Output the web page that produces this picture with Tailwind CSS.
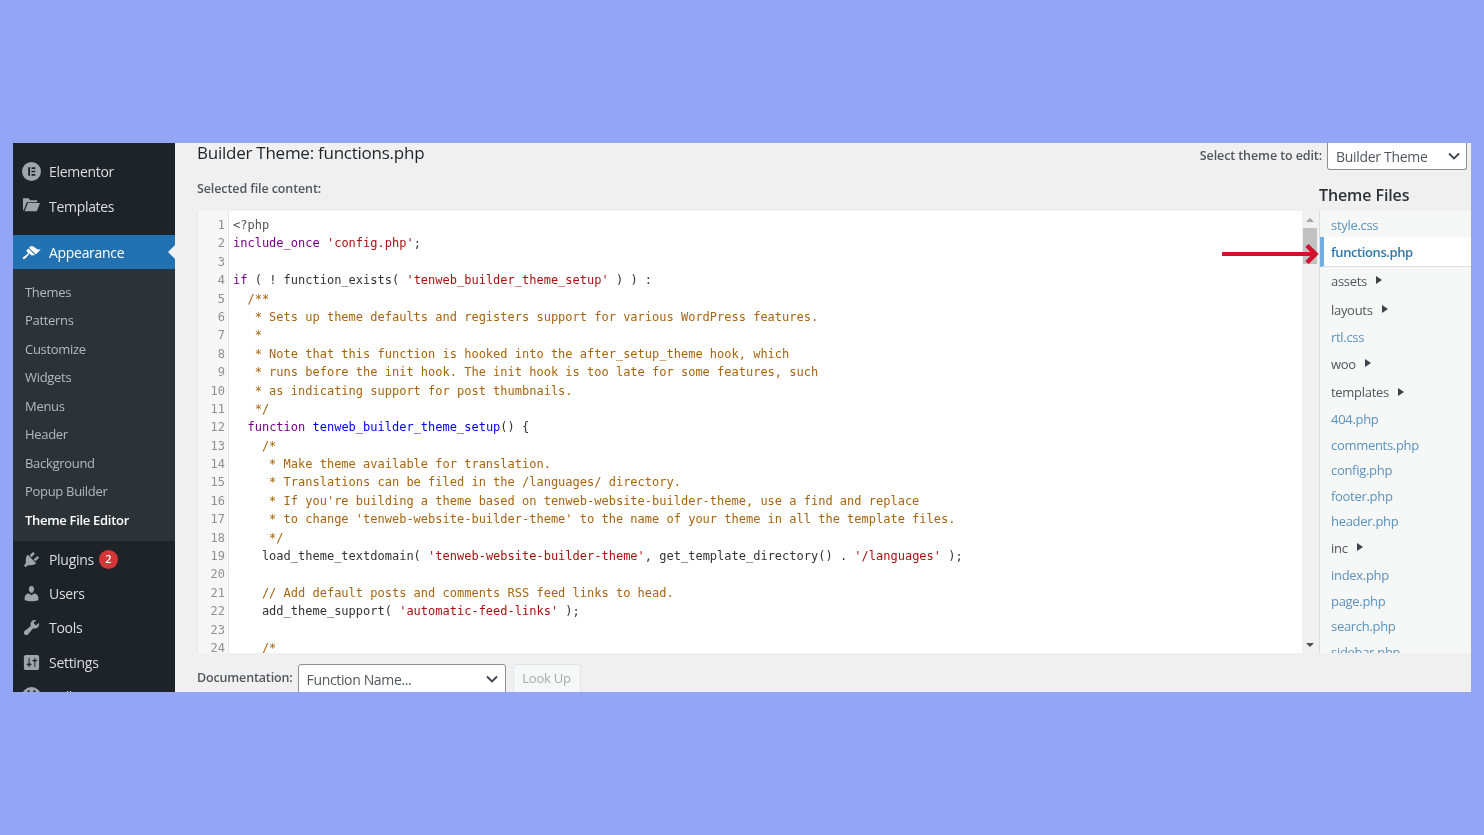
<!doctype html>
<html lang="en">
<head>
<meta charset="utf-8">
<title>Theme File Editor</title>
<script src="https://cdn.jsdelivr.net/npm/@tailwindcss/browser@4"></script>
</head>
<body class="bg-[#93a6f6] h-[835px] overflow-hidden font-['Open_Sans',sans-serif]">
<div class="pt-[143px] pl-[13px]">
  <div class="flex w-[1458px] h-[549px] overflow-hidden bg-[#f0f0f1] blur-[0.3px]">

    <!-- admin menu -->
    <nav class="w-[162px] shrink-0 bg-[#1d2327] pt-[11px] text-[14px] tracking-[-0.3px] text-[#dcdde0]">
      <a class="flex items-center h-[35px] pl-[9px] gap-[8px]">
        <svg class="w-[19px] h-[19px] text-[#a0a5aa]" viewBox="0 0 20 20"><path fill="currentColor" fill-rule="evenodd" d="M10 0a10 10 0 1 0 0 20a10 10 0 0 0 0-20zM6.500 5.500h2v9h-2zM10 5.500h4v1.800h-4zM10 9.100h4v1.800h-4zM10 12.700h4v1.800h-4z"/></svg>
        <span>Elementor</span>
      </a>
      <a class="flex items-center h-[35px] pl-[9px] gap-[8px]">
        <svg class="w-[19px] h-[19px] text-[#a0a5aa] -mt-[4px]" viewBox="0 0 20 20"><path fill="currentColor" d="M1 16V3.500h6l1.500 2H16v2H5L1.800 16zM2.800 17l3.400-8.500H19L15.600 17z"/></svg>
        <span>Templates</span>
      </a>
      <a class="relative flex items-center h-[34px] mt-[11px] pl-[9px] gap-[8px] bg-[#2271b1] text-white">
        <svg class="w-[19px] h-[19px] mt-[2px]" viewBox="0 0 20 20"><path fill="currentColor" d="M14.480 11.060L7.410 3.990l1.500-1.500c.5-.56 2.300-.47 3.510.32c1.210.8 1.430 1.280 2.910 2.100c1.180.64 2.450 1.260 4.450.85zm-.71.71L6.700 4.700L4.930 6.470c-.39.39-.39 1.020 0 1.410l1.060 1.060c.39.39.39 1.030 0 1.420c-.6.6-1.430 1.110-2.210 1.690c-.35.26-.7.53-1.010.84C1.430 13.230.4 14.850 1.100 15.550c.7.7 2.320-.33 3.660-1.670c.31-.31.58-.66.84-1.010c.58-.78 1.090-1.610 1.690-2.210c.39-.39 1.030-.39 1.420 0l1.060 1.060c.39.39 1.020.39 1.410 0z"/></svg>
        <span>Appearance</span>
        <span class="absolute right-0 top-[10px] border-y-[7px] border-y-transparent border-r-[7px] border-r-[#f0f0f1]"></span>
      </a>
      <ul class="bg-[#2c3338] pt-[8.750px] pb-[7px] text-[13px] tracking-[-0.3px] text-[#b4b9be]">
        <li class="h-[28.500px] leading-[28.500px] pl-[12px]">Themes</li>
        <li class="h-[28.500px] leading-[28.500px] pl-[12px]">Patterns</li>
        <li class="h-[28.500px] leading-[28.500px] pl-[12px]">Customize</li>
        <li class="h-[28.500px] leading-[28.500px] pl-[12px]">Widgets</li>
        <li class="h-[28.500px] leading-[28.500px] pl-[12px]">Menus</li>
        <li class="h-[28.500px] leading-[28.500px] pl-[12px]">Header</li>
        <li class="h-[28.500px] leading-[28.500px] pl-[12px]">Background</li>
        <li class="h-[28.500px] leading-[28.500px] pl-[12px]">Popup Builder</li>
        <li class="h-[28.500px] leading-[28.500px] pl-[12px] font-semibold text-white">Theme File Editor</li>
      </ul>
      <a class="flex items-center h-[34.200px] mt-[1px] pl-[9px] gap-[8px]">
        <svg class="w-[19px] h-[19px] text-[#a0a5aa]" viewBox="0 0 20 20"><path fill="currentColor" d="M13.110 4.360L9.870 7.600L8 5.730l3.240-3.240c.35-.34 1.050-.2 1.560.32c.52.51.66 1.210.31 1.550zm-8 1.770l.91-1.120l9.010 9.010l-1.190.84c-.71.71-2.630 1.160-3.820 1.160H6.140L4.900 17.260c-.59.59-1.540.59-2.120 0c-.59-.58-.59-1.530 0-2.120l1.240-1.240v-3.880c0-1.130.4-3.190 1.090-3.890zm7.260 3.970l3.240-3.240c.34-.35 1.040-.21 1.550.31c.52.51.66 1.210.31 1.550l-3.240 3.250z"/></svg>
        <span>Plugins</span>
        <span class="-ml-[3px] flex items-center justify-center w-[19px] h-[19px] rounded-full bg-[#d63638] text-white text-[11px] font-semibold">2</span>
      </a>
      <a class="flex items-center h-[34.200px] pl-[9px] gap-[8px]">
        <svg class="w-[19px] h-[19px] text-[#a0a5aa]" viewBox="0 0 20 20"><path fill="currentColor" d="M10 9.250c-2.270 0-2.730-3.440-2.730-3.440C7 4.020 7.820 2 9.970 2c2.160 0 2.980 2.020 2.710 3.810c0 0-.41 3.440-2.680 3.440zm0 2.570L12.720 10c2.390 0 4.520 2.330 4.520 4.530v2.490s-3.650 1.130-7.240 1.130c-3.650 0-7.240-1.130-7.240-1.130v-2.490c0-2.250 1.940-4.480 4.470-4.480z"/></svg>
        <span>Users</span>
      </a>
      <a class="flex items-center h-[34.200px] pl-[9px] gap-[8px]">
        <svg class="w-[19px] h-[19px] text-[#a0a5aa]" viewBox="0 0 20 20"><path fill="currentColor" fill-rule="evenodd" d="M16.680 9.770c-1.340 1.340-3.300 1.670-4.950.99l-5.410 6.520c-.99.99-2.590.99-3.580 0s-.99-2.590 0-3.570l6.520-5.420c-.68-1.650-.35-3.610.99-4.950c1.280-1.280 3.120-1.620 4.720-1.060l-2.890 2.890l2.820 2.820l2.860-2.870c.53 1.580.18 3.390-1.080 4.650z"/></svg>
        <span>Tools</span>
      </a>
      <a class="flex items-center h-[34.800px] pl-[9px] gap-[8px]">
        <svg class="w-[19px] h-[19px] text-[#a0a5aa]" viewBox="0 0 20 20"><path fill="currentColor" d="M18 16V4c0-1.100-.9-2-2-2H4c-1.100 0-2 .9-2 2v12c0 1.100.9 2 2 2h12c1.100 0 2-.9 2-2zM8 11h1c.55 0 1 .45 1 1s-.45 1-1 1H8v1.500c0 .28-.22.5-.5.5s-.5-.22-.5-.5V13H6c-.55 0-1-.45-1-1s.45-1 1-1h1V5.500c0-.28.22-.5.5-.5s.5.22.5.5V11zm5-2h-1c-.55 0-1-.45-1-1s.45-1 1-1h1V5.500c0-.28.22-.5.5-.5s.5.22.5.5V7h1c.55 0 1 .45 1 1s-.45 1-1 1h-1v5.500c0 .28-.22.5-.5.5s-.5-.22-.5-.5V9z"/></svg>
        <span>Settings</span>
      </a>
      <a class="flex items-center h-[34.400px] pl-[9px] gap-[8px]">
        <svg class="w-[19px] h-[19px] text-[#a0a5aa]" viewBox="0 0 20 20"><path fill="currentColor" fill-rule="evenodd" d="M10 0a10 10 0 1 0 0 20a10 10 0 0 0 0-20zM7 3.500a1.200 1.200 0 1 0 0 2.400a1.200 1.200 0 0 0 0-2.400zM13 3.500a1.200 1.200 0 1 0 0 2.400a1.200 1.200 0 0 0 0-2.400z"/></svg>
        <span>Collapse</span>
      </a>
    </nav>

    <!-- editor page -->
    <main class="relative flex-1 min-w-0 flex flex-col text-[#3c434a]">
      <div class="flex justify-between h-[68px] shrink-0">
        <div class="pl-[22px]">
          <h1 class="text-[17px] leading-[20px] font-medium tracking-[-0.25px] text-[#1d2327]">Builder Theme: functions.php</h1>
          <p class="mt-[17px] text-[12.500px] leading-[18px] font-semibold tracking-[-0.1px] text-[#50575e]">Selected file content:</p>
        </div>
        <div class="w-[280px] shrink-0">
          <div class="flex items-center justify-end pr-[4px] gap-[5px]">
            <label class="text-[12.500px] font-semibold tracking-[-0.1px] text-[#50575e] whitespace-nowrap">Select theme to edit:</label>
            <div class="flex items-center justify-between w-[140px] h-[27px] pl-[8px] pr-[6px] bg-white border border-t-0 border-[#8c8f94] rounded-b-[3px] text-[14px] tracking-[-0.3px] text-[#50575e]">
              <span>Builder Theme</span>
              <svg class="w-[12px] h-[12px]" viewBox="0 0 12 12"><path d="M1 3.500l5 5l5-5" fill="none" stroke="#3c434a" stroke-width="1.800"/></svg>
            </div>
          </div>
          <h2 class="mt-[11px] pl-[128px] text-[16px] leading-[28px] font-semibold tracking-[-0.1px] text-[#2c3338] whitespace-nowrap">Theme Files</h2>
        </div>
      </div>

      <div class="flex h-[442px] shrink-0 pl-[22px]">
        <div class="flex-1 min-w-0 flex overflow-hidden bg-white border-l border-[#e6e6e6] pt-[5px] font-['DejaVu_Sans_Mono',monospace] text-[12px] leading-[18.390px] text-[#333]">
          <div class="w-[31px] shrink-0 -mt-[5px] pt-[5px] bg-[#f7f7f7] border-r border-[#e4e4e4] pr-[3px] text-right text-[#8f8f8f]">
            <div>1</div><div>2</div><div>3</div><div>4</div><div>5</div><div>6</div><div>7</div><div>8</div><div>9</div><div>10</div><div>11</div><div>12</div><div>13</div><div>14</div><div>15</div><div>16</div><div>17</div><div>18</div><div>19</div><div>20</div><div>21</div><div>22</div><div>23</div><div>24</div>
          </div>
          <pre class="pl-[4px] font-['DejaVu_Sans_Mono',monospace]"><span class="text-[#555]">&lt;?php</span>
<span class="text-[#708]">include_once</span> <span class="text-[#a11]">'config.php'</span>;

<span class="text-[#708]">if</span> ( ! function_exists( <span class="text-[#a11]">'tenweb_builder_theme_setup'</span> ) ) :
<span class="text-[#a8650f]">  /**
   * Sets up theme defaults and registers support for various WordPress features.
   *
   * Note that this function is hooked into the after_setup_theme hook, which
   * runs before the init hook. The init hook is too late for some features, such
   * as indicating support for post thumbnails.
   */</span>
  <span class="text-[#708]">function</span> <span class="text-[#00f]">tenweb_builder_theme_setup</span>() {
<span class="text-[#a8650f]">    /*
     * Make theme available for translation.
     * Translations can be filed in the /languages/ directory.
     * If you're building a theme based on tenweb-website-builder-theme, use a find and replace
     * to change 'tenweb-website-builder-theme' to the name of your theme in all the template files.
     */</span>
    load_theme_textdomain( <span class="text-[#a11]">'tenweb-website-builder-theme'</span>, get_template_directory() . <span class="text-[#a11]">'/languages'</span> );

<span class="text-[#a8650f]">    // Add default posts and comments RSS feed links to head.</span>
    add_theme_support( <span class="text-[#a11]">'automatic-feed-links'</span> );

<span class="text-[#a8650f]">    /*</span></pre>
        </div>

        <!-- scrollbar -->
        <div class="relative w-[17px] shrink-0 bg-[#f1f1f1]">
          <span class="absolute left-[4px] top-[7px] border-x-[4px] border-x-transparent border-b-[4px] border-b-[#a3a3a3]"></span>
          <div class="absolute left-[1px] top-[17px] w-[14px] h-[36px] bg-[#c1c1c1]"></div>
          <span class="absolute left-[4px] bottom-[6px] border-x-[4px] border-x-transparent border-t-[4px] border-t-[#505050]"></span>
        </div>

        <!-- theme files -->
        <ul class="w-[152px] shrink-0 bg-[#f6f7f7] border-l border-[#dcdcde] overflow-hidden text-[13px] tracking-[-0.3px] text-[#5b93bd]">
          <li class="h-[26px] leading-[29px] pl-[11px]">style.css</li>
          <li class="h-[30px] pt-[1px] leading-[29px] pl-[7px] bg-white border-l-[4px] border-l-[#72aee6] border-b border-[#dcdcde] font-semibold tracking-[-0.4px] text-[#2f78ab]">functions.php</li>
          <li class="flex items-center h-[29px] pl-[11px] gap-[9px] text-[#50575e]">assets <span class="-mt-[3px] border-y-[4px] border-y-transparent border-l-[6px] border-l-[#3c434a]"></span></li>
          <li class="flex items-center h-[29px] pl-[11px] gap-[9px] text-[#50575e]">layouts <span class="-mt-[3px] border-y-[4px] border-y-transparent border-l-[6px] border-l-[#3c434a]"></span></li>
          <li class="h-[25px] leading-[25px] pl-[11px]">rtl.css</li>
          <li class="flex items-center h-[29px] pl-[11px] gap-[9px] text-[#50575e]">woo <span class="-mt-[3px] border-y-[4px] border-y-transparent border-l-[6px] border-l-[#3c434a]"></span></li>
          <li class="flex items-center h-[28px] pl-[11px] gap-[9px] text-[#50575e]">templates <span class="-mt-[3px] border-y-[4px] border-y-transparent border-l-[6px] border-l-[#3c434a]"></span></li>
          <li class="h-[25.500px] leading-[25.500px] pl-[11px]">404.php</li>
          <li class="h-[25.500px] leading-[25.500px] pl-[11px]">comments.php</li>
          <li class="h-[25.500px] leading-[25.500px] pl-[11px]">config.php</li>
          <li class="h-[25.500px] leading-[25.500px] pl-[11px]">footer.php</li>
          <li class="h-[25.500px] leading-[25.500px] pl-[11px]">header.php</li>
          <li class="flex items-center h-[28.500px] pl-[11px] gap-[9px] text-[#50575e]">inc <span class="-mt-[3px] border-y-[4px] border-y-transparent border-l-[6px] border-l-[#3c434a]"></span></li>
          <li class="h-[25.500px] leading-[25.500px] pl-[11px]">index.php</li>
          <li class="h-[25.500px] leading-[25.500px] pl-[11px]">page.php</li>
          <li class="h-[25.500px] leading-[25.500px] pl-[11px]">search.php</li>
          <li class="h-[25.500px] leading-[25.500px] pl-[11px]">sidebar.php</li>
        </ul>
      </div>

      <div class="flex items-start gap-[5px] pl-[22px] pt-[11px]">
        <label class="text-[12.500px] leading-[28px] font-semibold tracking-[-0.15px] text-[#50575e]">Documentation:</label>
        <div class="flex items-center justify-between w-[208px] h-[40px] pl-[8px] pr-[7px] pb-[10px] bg-white border border-[#8c8f94] rounded-[3px] text-[14px] tracking-[-0.35px] text-[#50575e]">
          <span>Function Name...</span>
          <svg class="w-[12px] h-[12px]" viewBox="0 0 12 12"><path d="M1 3.500l5 5l5-5" fill="none" stroke="#3c434a" stroke-width="1.800"/></svg>
        </div>
        <button class="ml-[2px] w-[68px] h-[40px] pb-[10px] bg-[#f6f7f7] border border-[#e2e4e7] rounded-[3px] text-[13px] tracking-[-0.2px] text-[#a7aaad]">Look Up</button>
      </div>

      <!-- callout arrow -->
      <svg class="absolute left-[1047px] top-[99px] w-[100px] h-[24px]" viewBox="0 0 100 24"><path d="M0 12H92" stroke="#d0102c" stroke-width="4"/><path d="M85 3.500l8.500 8.500l-8.500 8.500" fill="none" stroke="#d0102c" stroke-width="4.500"/></svg>
    </main>
  </div>
</div>
</body>
</html>
